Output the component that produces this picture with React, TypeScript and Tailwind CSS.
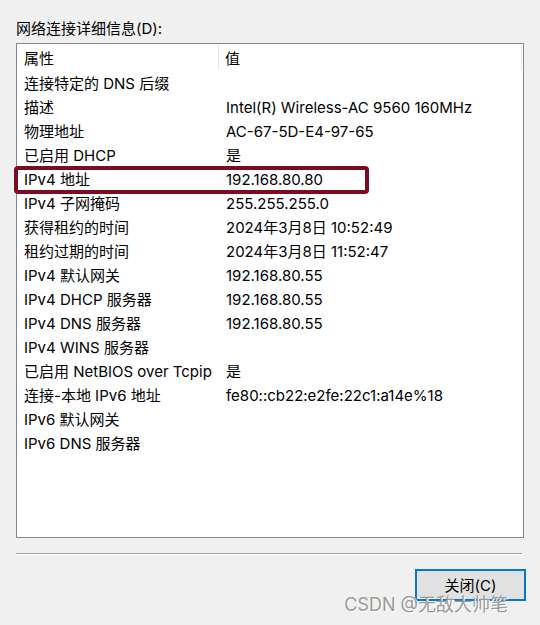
import React from 'react'

const rows: [string, string][] = [
  ['连接特定的 DNS 后缀', ''],
  ['描述', 'Intel(R) Wireless-AC 9560 160MHz'],
  ['物理地址', 'AC-67-5D-E4-97-65'],
  ['已启用 DHCP', '是'],
  ['IPv4 地址', '192.168.80.80'],
  ['IPv4 子网掩码', '255.255.255.0'],
  ['获得租约的时间', '2024年3月8日 10:52:49'],
  ['租约过期的时间', '2024年3月8日 11:52:47'],
  ['IPv4 默认网关', '192.168.80.55'],
  ['IPv4 DHCP 服务器', '192.168.80.55'],
  ['IPv4 DNS 服务器', '192.168.80.55'],
  ['IPv4 WINS 服务器', ''],
  ['已启用 NetBIOS over Tcpip', '是'],
  ['连接-本地 IPv6 地址', 'fe80::cb22:e2fe:22c1:a14e%18'],
  ['IPv6 默认网关', ''],
  ['IPv6 DNS 服务器', ''],
]

export default function App() {
  return (
    <div
      className="w-[540px] h-[625px] bg-[#f0f0f0] text-black text-[15px] leading-none relative overflow-hidden"
      style={{ fontFamily: 'Inter, "Noto Sans CJK SC", sans-serif' }}
    >
      <div className="pt-[21px] pl-[16px] h-[43px]">网络连接详细信息(D):</div>

      {/* 列表 */}
      <div className="ml-[16px] w-[508px] h-[495px] border border-[#828790] bg-white relative">
        <div className="flex h-[27px] items-stretch">
          <div className="w-[202px] pl-[7px] pt-[2px] flex items-center border-r border-[#e5e5e5] my-[1px]">属性</div>
          <div className="w-[303px] pl-[6px] pt-[2px] flex items-center border-r border-[#e5e5e5] my-[1px]">值</div>
        </div>
        {rows.map(([k, v], i) => (
          <div key={i} className="flex h-[24px] items-center">
            <div className="w-[202px] pl-[7px] whitespace-nowrap">{k}</div>
            <div className="pl-[7px] whitespace-nowrap">{v}</div>
          </div>
        ))}
        {/* 标注框 */}
        <div className="absolute left-[-3px] top-[122px] w-[355px] h-[28px] border-[4px] border-[#7a0c1f] rounded-[4px]" />
      </div>

      <div className="ml-[16px] mt-[15px] w-[506px] h-[2px] border-t border-[#a0a0a0] border-b border-b-white" />

      <div className="flex justify-end pr-[14px] mt-[14px]">
        <button className="w-[111px] h-[32px] bg-[#e1e1e1] border-2 border-[#0078d7] flex items-center justify-center text-[15px]">
          关闭(C)
        </button>
      </div>

      <div
        className="absolute right-[32px] top-[596px] text-[18px] text-[#9a9a9a] whitespace-nowrap"
        style={{ textShadow: '1px 1px 0 #ffffff' }}
      >
        CSDN @无敌大帅笔
      </div>
    </div>
  )
}
